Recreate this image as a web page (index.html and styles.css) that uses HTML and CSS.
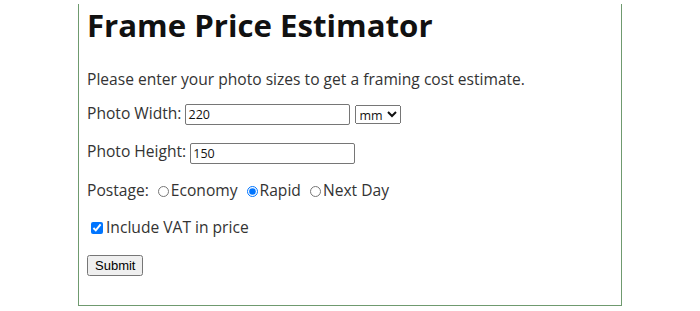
FILE: index.html
```html
<!DOCTYPE html>
<html lang="en">
<head>
  <meta charset="UTF-8">
  <meta name="viewport" content="width=device-width, initial-scale=1.0">
  <title>Frame Price Estimator</title>
  <link rel="stylesheet" href="styles.css">
</head>
<body>
  <div class="container">
    <h1>Frame Price Estimator</h1>
    <p class="intro">Please enter your photo sizes to get a framing cost estimate.</p>

    <form class="estimator">
      <p>
        <label for="width">Photo Width:</label>
        <input type="text" id="width" value="220">
        <select id="unit">
          <option>mm</option>
          <option>cm</option>
          <option>in</option>
        </select>
      </p>

      <p>
        <label for="height">Photo Height:</label>
        <input type="text" id="height" value="150">
      </p>

      <p>
        Postage:
        <input type="radio" name="postage" id="economy"><label for="economy">Economy</label>
        <input type="radio" name="postage" id="rapid" checked><label for="rapid">Rapid</label>
        <input type="radio" name="postage" id="nextday"><label for="nextday">Next Day</label>
      </p>

      <p>
        <input type="checkbox" id="vat" checked><label for="vat">Include VAT in price</label>
      </p>

      <p>
        <button type="submit" class="submit-btn">Submit</button>
      </p>
    </form>
  </div>
</body>
</html>
```

FILE: styles.css
```css
body {
  margin: 0;
  font-family: 'Open Sans', 'Noto Sans', sans-serif;
  font-size: 15.6px;
  color: #333;
  background: white;
}

.container {
  width: 526px;
  margin: 0 auto;
  padding: 0 8px 14px;
  border: 1px solid #6f9a6f;
  border-top: none;
}

h1 {
  margin: 4px 0 22px;
  font-size: 31.2px;
  font-weight: 700;
  color: #111;
}

p {
  margin: 15px 0;
  line-height: 22px;
}

.intro {
  margin-bottom: 12px;
}

.estimator p:first-child {
  margin-top: 12px;
}

input,
select,
button {
  vertical-align: middle;
}

input[type="text"] {
  width: 159px;
  height: 17px;
  padding: 1px 2px;
  border: 1px solid #767676;
  border-radius: 2px;
  font-family: 'Open Sans', sans-serif;
  font-size: 12.5px;
  color: #111;
}

select {
  font-family: 'Open Sans', sans-serif;
  font-size: 12.5px;
  color: #111;
  height: 19px;
}

input[type="radio"] {
  width: 11px;
  height: 11px;
  margin: 0 2px 0 5px;
}

input[type="checkbox"] {
  width: 12px;
  height: 12px;
  margin: 0 3px 0 4px;
}

.submit-btn {
  font-family: 'Liberation Sans', Arial, sans-serif;
  font-size: 13px;
  padding: 1px 6px;
}
```
